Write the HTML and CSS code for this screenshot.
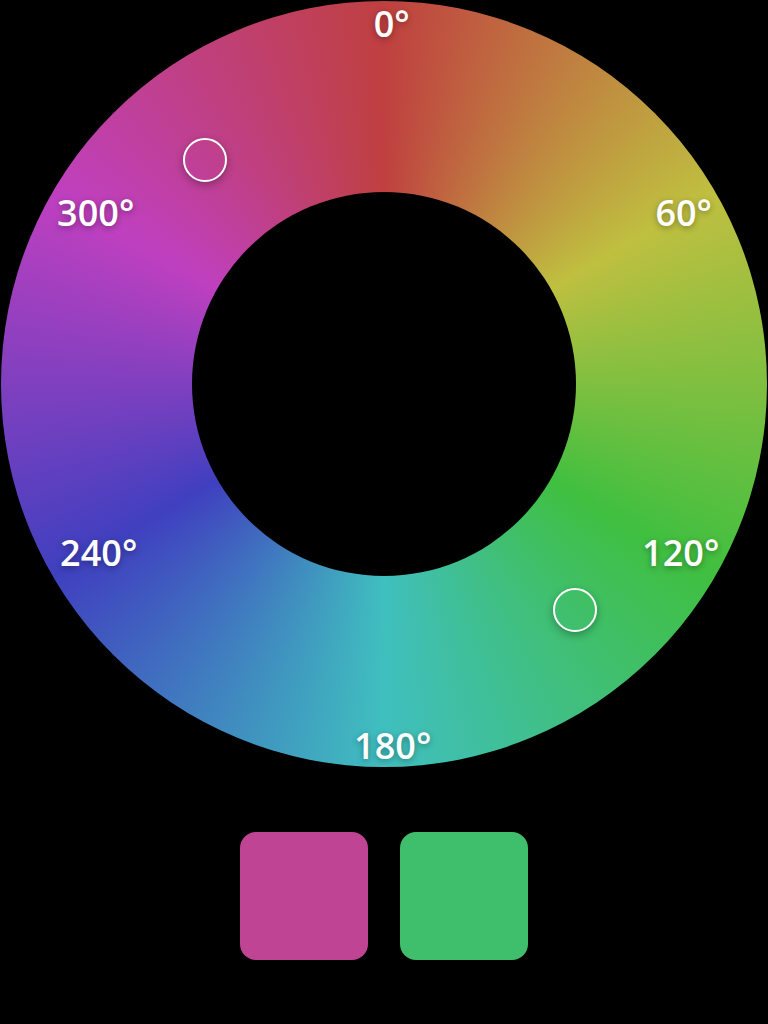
FILE: index.html
```html
<!DOCTYPE html>
<html lang="en">
<head>
    <meta charset="UTF-8">
    <meta name="viewport" content="width=device-width, initial-scale=1.0">
    <title>Color Wheel</title>
    <link rel="stylesheet" href="styles.css">
</head>
<body>

    <div class="picker">
        <div class="wheel">
            <span class="label deg-0">0<i>°</i></span>
            <span class="label deg-60">60<i>°</i></span>
            <span class="label deg-120">120<i>°</i></span>
            <span class="label deg-180">180<i>°</i></span>
            <span class="label deg-240">240<i>°</i></span>
            <span class="label deg-300">300<i>°</i></span>

            <span class="handle handle-a"></span>
            <span class="handle handle-b"></span>
        </div>

        <div class="swatches">
            <div class="swatch swatch-a"></div>
            <div class="swatch swatch-b"></div>
        </div>
    </div>

</body>
</html>
```

FILE: styles.css
```css
body {
    margin: 0;
    background: #000;
    font-family: 'Open Sans', sans-serif;
}

.picker {
    display: flex;
    flex-direction: column;
    align-items: center;
}

.wheel {
    position: relative;
    width: 766px;
    height: 766px;
    margin-top: 1px;
    border-radius: 50%;
    background: conic-gradient(
        hsl(0, 50%, 50%),
        hsl(30, 50%, 50%),
        hsl(60, 50%, 50%),
        hsl(90, 50%, 50%),
        hsl(120, 50%, 50%),
        hsl(150, 50%, 50%),
        hsl(180, 50%, 50%),
        hsl(210, 50%, 50%),
        hsl(240, 50%, 50%),
        hsl(270, 50%, 50%),
        hsl(300, 50%, 50%),
        hsl(330, 50%, 50%),
        hsl(360, 50%, 50%)
    );
}

/* hole in the middle of the ring */
.wheel::after {
    content: "";
    position: absolute;
    inset: 191px;
    border-radius: 50%;
    background: #000;
}

.label {
    position: absolute;
    transform: translate(-50%, -50%);
    color: #fff;
    font-size: 36px;
    font-weight: 600;
    line-height: 1;
    text-shadow: 0 2px 6px rgba(0, 0, 0, 0.35);
}

.label i {
    position: absolute;
    left: 100%;
    font-style: normal;
}

.deg-0 { left: 383px; top: 23px; }
.deg-60 { left: 675px; top: 212px; }
.deg-120 { left: 672px; top: 552px; }
.deg-180 { left: 384px; top: 745px; }
.deg-240 { left: 90px; top: 552px; }
.deg-300 { left: 87px; top: 212px; }

.handle {
    position: absolute;
    width: 40px;
    height: 40px;
    margin: -22px 0 0 -22px;
    border: 2px solid #fff;
    border-radius: 50%;
    box-shadow: 0 3px 8px rgba(0, 0, 0, 0.3);
}

.handle-a { left: 204px; top: 159px; }
.handle-b { left: 574px; top: 609px; }

.swatches {
    display: flex;
    gap: 32px;
    margin-top: 65px;
}

.swatch {
    width: 128px;
    height: 128px;
    border-radius: 16px;
}

.swatch-a { background: #bf4494; }
.swatch-b { background: #3fbf6b; }
```
